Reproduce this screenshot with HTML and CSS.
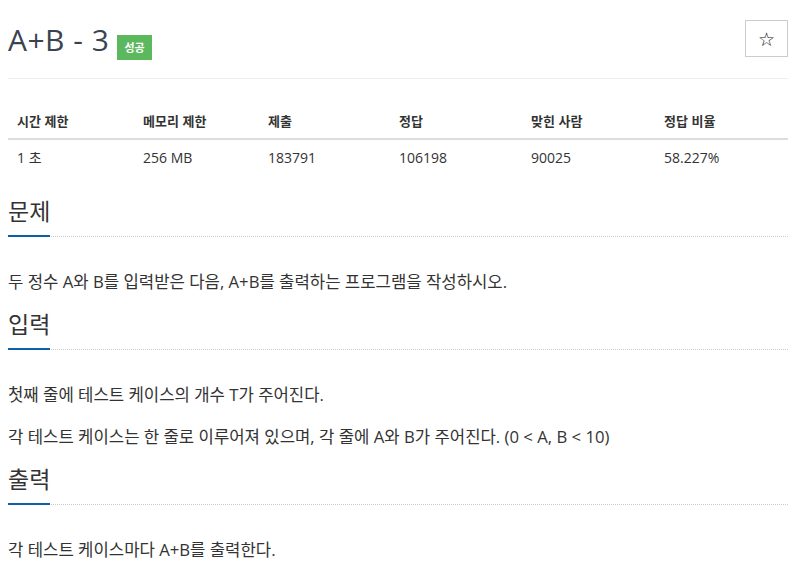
FILE: index.html
```html
<!DOCTYPE html>
<html lang="ko">
<head>
<meta charset="utf-8">
<link rel="stylesheet" href="styles.css">
</head>
<body>
<div class="page">
  <div class="title-row">
    <h1 class="title"><span class="title-text">A+B - 3</span><span class="badge">성공</span></h1>
    <button class="star-btn" type="button">☆</button>
  </div>
  <table class="info">
    <colgroup>
      <col class="c1"><col class="c2"><col class="c3"><col class="c4"><col class="c5"><col class="c6">
    </colgroup>
    <thead>
      <tr><th>시간 제한</th><th>메모리 제한</th><th>제출</th><th>정답</th><th>맞힌 사람</th><th>정답 비율</th></tr>
    </thead>
    <tbody>
      <tr><td>1 초</td><td>256 MB</td><td>183791</td><td>106198</td><td>90025</td><td>58.227%</td></tr>
    </tbody>
  </table>
  <section class="sec">
    <div class="headline"><h2>문제</h2></div>
    <p>두 정수 A와 B를 입력받은 다음, A+B를 출력하는 프로그램을 작성하시오.</p>
  </section>
  <section class="sec">
    <div class="headline"><h2>입력</h2></div>
    <p>첫째 줄에 테스트 케이스의 개수 T가 주어진다.</p>
    <p>각 테스트 케이스는 한 줄로 이루어져 있으며, 각 줄에 A와 B가 주어진다. (0 &lt; A, B &lt; 10)</p>
  </section>
  <section class="sec">
    <div class="headline"><h2>출력</h2></div>
    <p>각 테스트 케이스마다 A+B를 출력한다.</p>
  </section>
</div>
</body>
</html>
```
FILE: styles.css
```css
html, body {
  margin: 0;
  padding: 0;
  background: #fff;
}
body {
  font-family: "Open Sans", "Noto Sans CJK KR", sans-serif;
  color: #333;
  font-size: 14px;
}
.page {
  padding: 0 12px 0 8px;
}
.title-row {
  display: flex;
  justify-content: space-between;
  align-items: flex-start;
  padding-top: 20px;
  padding-bottom: 18px;
  border-bottom: 1px solid #eee;
}
.title {
  margin: 0;
  display: flex;
  align-items: flex-end;
  font-weight: 400;
  font-size: 30px;
  line-height: 40px;
  color: #3c4350;
}
.title-text {
  letter-spacing: 0.5px;
}
.badge {
  display: inline-block;
  margin-left: 8px;
  margin-bottom: 0;
  background: #5cb85c;
  color: #fff;
  font-size: 11px;
  font-weight: 700;
  line-height: 25px;
  height: 25px;
  padding: 0 7px;
  font-family: "Noto Sans CJK KR", sans-serif;
}
.star-btn {
  width: 43px;
  height: 37px;
  border: 1px solid #ccc;
  background: #fff;
  font-size: 19px;
  color: #111;
  padding: 0;
  margin-top: 0;
  font-family: "DejaVu Sans", sans-serif;
}
.info {
  width: 100%;
  border-collapse: collapse;
  margin-top: 23px;
  margin-bottom: 14px;
  table-layout: fixed;
}
.c1 { width: 126px; }
.c2 { width: 125px; }
.c3 { width: 131px; }
.c4 { width: 132px; }
.c5 { width: 133px; }
.info th, .info td {
  text-align: left;
  padding: 8px 9px;
  font-size: 13px;
  line-height: 20px;
}
.info th {
  font-weight: 700;
  padding-top: 9px;
  padding-bottom: 7px;
  border-bottom: 2px solid #ddd;
  font-family: "Noto Sans CJK KR", sans-serif;
}
.info td {
  padding-top: 8px;
  font-size: 14px;
  color: #333;
}
.sec {
  margin-top: 9px;
}
.headline {
  border-bottom: 1px dotted #ccc;
}
.headline h2 {
  margin: 0;
  display: inline-block;
  font-size: 23px;
  font-weight: 400;
  line-height: 36px;
  padding-top: 2px;
  padding-bottom: 7px;
  border-bottom: 2px solid #0f5ea8;
  margin-bottom: -1px;
  color: #333;
  font-family: "Noto Sans CJK KR", sans-serif;
}
.sec p {
  margin: 32px 0 0;
  font-size: 16.7px;
  line-height: 25px;
  font-family: "Open Sans", "Noto Sans CJK KR", sans-serif;
}
.sec p + p {
  margin-top: 17px;
}
```
